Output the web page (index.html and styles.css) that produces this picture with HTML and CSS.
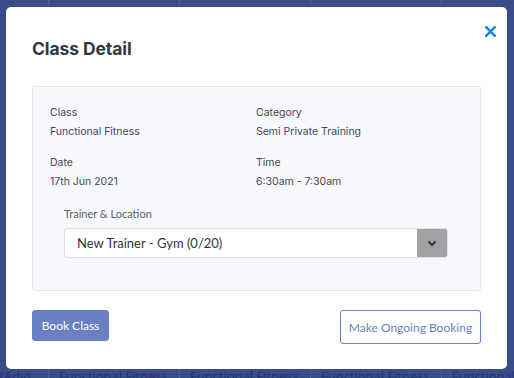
FILE: index.html
```html
<!DOCTYPE html>
<html>
<head>
<meta charset="utf-8">
<link rel="stylesheet" href="styles.css">
</head>
<body>
<div class="bg-grid">
  <div class="bg-row upper">
    <div class="cell"></div><div class="cell"></div><div class="cell"></div><div class="cell"></div><div class="cell"></div>
  </div>
  <div class="bg-row bottom">
    <div class="cell">(Adv)</div><div class="cell">Functional Fitness</div><div class="cell">Functional Fitness</div><div class="cell">Functional Fitness</div><div class="cell">Functional</div>
  </div>
</div>

<div class="modal">
  <button class="close" aria-label="Close">
    <svg width="11" height="11" viewBox="0 0 11 11"><path d="M1.2 1.2 L9.8 9.8 M9.8 1.2 L1.2 9.8" stroke="#1a7fe8" stroke-width="2.4" stroke-linecap="square" fill="none"/></svg>
  </button>
  <h1 class="title">Class Detail</h1>
  <div class="panel">
    <div class="info-grid">
      <div class="field">
        <div class="label">Class</div>
        <div class="value">Functional Fitness</div>
      </div>
      <div class="field">
        <div class="label">Category</div>
        <div class="value">Semi Private Training</div>
      </div>
      <div class="field">
        <div class="label">Date</div>
        <div class="value">17th Jun 2021</div>
      </div>
      <div class="field">
        <div class="label">Time</div>
        <div class="value">6:30am - 7:30am</div>
      </div>
    </div>
    <div class="trainer">
      <div class="trainer-label">Trainer &amp; Location</div>
      <div class="select">
        <span class="select-text">New Trainer - Gym (0/20)</span>
        <span class="select-arrow">
          <svg width="10" height="7" viewBox="0 0 10 7"><path d="M1.5 1.5 L5 5 L8.5 1.5" stroke="#2e3440" stroke-width="2" fill="none"/></svg>
        </span>
      </div>
    </div>
  </div>
  <div class="actions">
    <button class="btn btn-primary">Book Class</button>
    <button class="btn btn-outline">Make Ongoing Booking</button>
  </div>
</div>
</body>
</html>
```

FILE: styles.css
```css
* { box-sizing: border-box; }
html, body {
  margin: 0;
  padding: 0;
}
body {
  width: 514px;
  height: 378px;
  overflow: hidden;
  background: #3a4c8a;
  position: relative;
  font-family: Inter, "Open Sans", sans-serif;
}
.bg-grid {
  width: 514px;
}
.bg-row {
  display: grid;
  grid-template-columns: 49px 131px 131px 131px 72px;
}
.bg-row.upper { height: 366px; }
.bg-row.bottom { height: 12px; overflow: hidden; }
.cell {
  border-right: 1px dotted #5567a0;
  color: #25346a;
  font-size: 13px;
  line-height: 16px;
  font-family: "Open Sans", sans-serif;
  padding: 3px 0 0 10px;
  white-space: nowrap;
  overflow: hidden;
}
.bg-row.bottom .cell { padding-top: 2px; }
.bg-row.bottom .cell:first-child { padding-left: 0; }
.bg-row .cell:last-child { border-right: 0; }

.modal {
  position: absolute;
  left: 6px;
  top: 7px;
  width: 501px;
  height: 362px;
  background: #fff;
  border-radius: 5px;
  padding: 31px 26px 0 26px;
  display: flex;
  flex-direction: column;
}
.close {
  position: absolute;
  top: 19px;
  right: 11px;
  border: 0;
  background: none;
  padding: 0;
  width: 11px;
  height: 11px;
  display: flex;
}
.title {
  margin: 0;
  font-family: Inter, sans-serif;
  font-weight: 700;
  font-size: 17.5px;
  line-height: 22px;
  color: #2c3a42;
  letter-spacing: -0.1px;
}
.panel {
  margin-top: 26px;
  background: #f7f8fc;
  border: 1px solid #e1e4ea;
  border-radius: 3px;
  padding: 18px 17px 32px 17px;
}
.info-grid {
  display: grid;
  grid-template-columns: 206px 1fr;
  row-gap: 15px;
}
.label, .value {
  font-size: 10.5px;
  line-height: 16px;
  color: #3f4952;
}
.value { margin-top: 3px; }
.trainer {
  margin-top: 16px;
  padding: 0 15px 0 14px;
}
.trainer-label {
  font-family: Lato, "Open Sans", sans-serif;
  font-size: 11px;
  line-height: 16px;
  color: #5a5f66;
}
.select {
  margin-top: 6px;
  height: 30px;
  border: 1px solid #dde0e5;
  border-radius: 3px;
  background: #fff;
  display: flex;
  align-items: center;
  overflow: hidden;
}
.select-text {
  flex: 1;
  padding-left: 12px;
  font-family: Lato, "Open Sans", sans-serif;
  font-size: 13px;
  color: #2f343a;
}
.select-arrow {
  width: 30px;
  height: 100%;
  background: #a2a2a4;
  display: flex;
  align-items: center;
  justify-content: center;
}
.actions {
  margin-top: 19px;
  display: flex;
  justify-content: space-between;
  align-items: flex-start;
}
.btn {
  font-family: Lato, "Open Sans", sans-serif;
  font-size: 12px;
  border-radius: 3px;
  padding: 0;
  cursor: pointer;
}
.btn-primary {
  width: 77px;
  height: 31px;
  background: #6b7fc3;
  border: 1px solid #6b7fc3;
  color: #fff;
}
.btn-outline {
  width: 141px;
  height: 34px;
  background: #fff;
  border: 1px solid #6b7fc3;
  color: #6b7fc3;
}
```
